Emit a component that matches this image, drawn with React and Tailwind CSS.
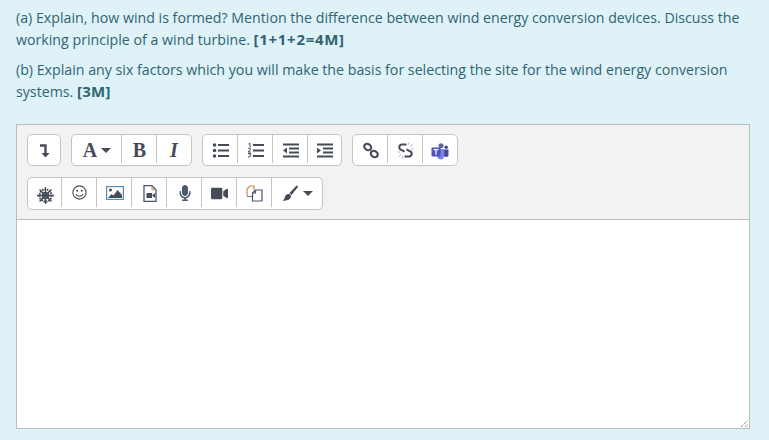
import { FaMicrophone, FaVideo } from "react-icons/fa";

const ink = "#454b57";

function Btn({ children, className = "w-[35px]", last }) {
  return (
    <div className={`relative flex h-full items-center justify-center ${className}`}>
      {children}
      {!last && <span className="absolute right-0 top-0 bottom-[2px] w-px bg-[#c4c4c4]" />}
    </div>
  );
}

function Group({ children, className = "" }) {
  return (
    <div className={`flex rounded-[5px] border border-[#c4c4c4] bg-white ${className}`}>
      {children}
    </div>
  );
}

function Caret() {
  return <span className="ml-[4px] h-0 w-0 border-x-[5px] border-t-[5px] border-x-transparent border-t-[#454b57]" />;
}

function Lines({ kind }) {
  const rows = kind === "indent" || kind === "outdent";
  return (
    <svg width="18" height="15" viewBox="0 0 18 15">
      {kind === "ul" && (
        <>
          <circle cx="2.5" cy="2" r="1.8" fill={ink} />
          <circle cx="2.5" cy="7.5" r="1.8" fill={ink} />
          <circle cx="2.5" cy="13" r="1.8" fill={ink} />
          <path d="M6 2h11M6 7.5h11M6 13h11" stroke={ink} strokeWidth="2" />
        </>
      )}
      {kind === "ol" && (
        <>
          <path d="M1.5 1l1.5-.6V4.5M1 6c1-1.2 3-.7 2.4.6L1 9h3M1 10.5h3l-1.5 1.3c2 0 2 2.4-1.5 2.2" stroke={ink} strokeWidth="1" fill="none" />
          <path d="M6 2h11M6 7.5h11M6 13h11" stroke={ink} strokeWidth="2" />
        </>
      )}
      {rows && (
        <>
          <path d="M1 1.5h16M7 5.5h10M7 9.5h10M1 13.5h16" stroke={ink} strokeWidth="2.2" />
          <path d={kind === "outdent" ? "M5 4.5v6L1 7.5z" : "M1 4.5v6l4-3z"} fill={ink} />
        </>
      )}
    </svg>
  );
}

function TeamsIcon() {
  return (
    <svg width="18" height="17" viewBox="0 0 18 17" className="mt-[3px]">
      <circle cx="10" cy="2.8" r="2.5" fill="#6264a7" />
      <circle cx="15.2" cy="4.2" r="1.8" fill="#464a96" />
      <path d="M12.5 6.5h5v5a2.5 2.5 0 0 1-5 0z" fill="#464a96" />
      <path d="M6 6h7.2v7a3.6 3.6 0 0 1-7 1z" fill="#7b83eb" />
      <rect x="0.5" y="4.5" width="9" height="9" rx="0.8" fill="#4b53bc" />
      <path d="M2.5 6.7h5M5 6.7v5" stroke="#fff" strokeWidth="1.2" />
    </svg>
  );
}

export default function App() {
  return (
    <div className="min-h-screen bg-[#def2f8] px-4 pt-[7px] pb-[10px] font-['Open_Sans',sans-serif] text-[14.2px] leading-[22px] text-[#2f6473]">
      <p className="mb-2 w-[730px]">
        (a) Explain, how wind is formed? Mention the difference between wind energy conversion devices. Discuss the working principle of a wind turbine. <b className="text-[15px] leading-none tracking-[0.7px]">[1+1+2=4M]</b>
      </p>
      <p className="w-[730px]">
        (b) Explain any six factors which you will make the basis for selecting the site for the wind energy conversion systems. <b className="text-[15px] leading-none tracking-[0.3px]">[3M]</b>
      </p>

      <div className="mt-[21px] w-[734px] border border-[#bdbdbd]">
        <div className="flex h-[95px] flex-col gap-[11px] border-b border-[#bdbdbd] bg-[#f2f2f2] px-[10px] pt-[9px]">
          <div className="flex h-[32px] gap-[10px]">
            <Group className="w-[34px]">
              <Btn className="w-full" last>
                <svg width="11" height="15" viewBox="0 0 11 15">
                  <path d="M1 2.5h5.5v9" stroke={ink} strokeWidth="2.4" fill="none" />
                  <path d="M2.5 10h8L6.5 14.5z" fill={ink} />
                </svg>
              </Btn>
            </Group>
            <Group className="w-[121px]">
              <Btn className="w-[50px] font-['Liberation_Serif',serif] text-[20px] font-bold text-[#454b57]">
                A<Caret />
              </Btn>
              <Btn className="w-[35px] font-['Liberation_Serif',serif] text-[20px] font-bold text-[#454b57]">B</Btn>
              <Btn className="w-[34px] font-['Liberation_Serif',serif] text-[20px] font-bold italic text-[#454b57]" last>I</Btn>
            </Group>
            <Group className="w-[140px]">
              <Btn><Lines kind="ul" /></Btn>
              <Btn><Lines kind="ol" /></Btn>
              <Btn><Lines kind="outdent" /></Btn>
              <Btn className="w-[33px]" last><Lines kind="indent" /></Btn>
            </Group>
            <Group className="w-[106px]">
              <Btn>
                <svg width="16" height="17" viewBox="0 0 16 17" fill="none" stroke={ink} strokeWidth="2.2">
                  <ellipse cx="4.7" cy="5" rx="3.6" ry="3" transform="rotate(35 4.7 5)" />
                  <ellipse cx="11.3" cy="12" rx="3.6" ry="3" transform="rotate(35 11.3 12)" />
                </svg>
              </Btn>
              <Btn>
                <svg width="17" height="17" viewBox="0 0 17 17" fill="none" stroke={ink}>
                  <path d="M9.5 2.5H5a2.7 2.7 0 0 0-1 5.2l3.5 2M7.5 14.5H12a2.7 2.7 0 0 0 1-5.2l-3.5-2" strokeWidth="2" />
                  <path d="M12 .5l-1 2.5M15.5 2.5l-2.5 2M16.5 7h-2.5M.5 10H3M1.5 14.5l2.5-2M5 16.5l1-2.5" stroke="#9aa0a8" strokeWidth="0.8" />
                </svg>
              </Btn>
              <Btn className="w-[34px]" last><TeamsIcon /></Btn>
            </Group>
          </div>
          <div className="flex h-[33px]">
            <Group className="w-[296px]">
              <Btn className="w-[34px]">
                <svg width="17" height="17" viewBox="0 0 17 17" fill="none" stroke={ink} className="mt-[3px]">
                  <circle cx="8.5" cy="8.5" r="6" strokeWidth="2" strokeDasharray="1.6 0.8" />
                  <circle cx="8.5" cy="8.5" r="3" strokeWidth="1.6" />
                  <path d="M8.5 0v17M0 8.5h17M2.5 2.5l12 12M14.5 2.5l-12 12" strokeWidth="1.3" />
                </svg>
              </Btn>
              <Btn>
                <svg width="15" height="15" viewBox="0 0 15 15" fill="none" stroke={ink} strokeWidth="1.1" className="-mt-[2px]">
                  <circle cx="7.5" cy="7.5" r="6.6" />
                  <circle cx="5.2" cy="5.8" r="1" fill={ink} stroke="none" />
                  <circle cx="9.8" cy="5.8" r="1" fill={ink} stroke="none" />
                  <path d="M4 9.2a4 4 0 0 0 7 0" />
                </svg>
              </Btn>
              <Btn>
                <svg width="18" height="14" viewBox="0 0 18 14" className="-mt-[1px]">
                  <rect x="0.6" y="0.6" width="16.8" height="12.8" fill="#fff" stroke="#5a8fb5" strokeWidth="1.2" />
                  <circle cx="4.5" cy="4" r="1.5" fill={ink} />
                  <path d="M2 12l3.5-4 2 1.5L11.5 4l4.5 5v3z" fill={ink} />
                </svg>
              </Btn>
              <Btn>
                <svg width="14" height="17" viewBox="0 0 14 17">
                  <path d="M1 .7h8l4 4v11.6H1z" fill="#fff" stroke="#4a5275" strokeWidth="1.3" />
                  <path d="M9 .7v4h4" fill="none" stroke="#c08a55" strokeWidth="1" />
                  <rect x="3.5" y="8" width="5.5" height="5" fill={ink} />
                  <path d="M9 10.5l3-2.5v5z" fill={ink} />
                </svg>
              </Btn>
              <Btn>
                <FaMicrophone className="-mt-[2px] text-[16px] text-[#4a5a70]" />
              </Btn>
              <Btn>
                <FaVideo className="text-[17px] text-[#454b57]" />
              </Btn>
              <Btn>
                <svg width="17" height="17" viewBox="0 0 17 17" fill="none" strokeWidth="1.2">
                  <path d="M1 11V4l3-3h4v4" stroke="#c08a55" />
                  <path d="M1 11.5h5" stroke="#5a8fb5" />
                  <path d="M6.5 8l3-3h6.5v11H6.5z" fill="#fff" stroke="#4a5275" />
                  <path d="M6.5 8h3V5" stroke="#4a5275" />
                </svg>
              </Btn>
              <Btn className="w-[50px]" last>
                <svg width="17" height="17" viewBox="0 0 17 17">
                  <path d="M15.5.8c.7.5.5 1.2 0 1.8L9.6 10 7.4 8.3 14 1c.5-.4 1-.5 1.5-.2z" fill={ink} />
                  <path d="M6.7 9c1.7.2 2.6 1.5 2.2 3.1C8.3 14.800 4.500 16.200.5 15.500c1.800-.8 2-2 2.400-3.500C3.300 10.300 5 8.800 6.700 9z" fill={ink} />
                </svg>
                <Caret />
              </Btn>
            </Group>
          </div>
        </div>
        <div className="relative h-[208px] bg-white">
          <svg className="absolute bottom-0 right-0" width="9" height="9" viewBox="0 0 9 9" stroke="#555" strokeWidth="1" strokeDasharray="1 1">
            <path d="M1 8L8 1M5 8L8 5" />
          </svg>
        </div>
      </div>
    </div>
  );
}
